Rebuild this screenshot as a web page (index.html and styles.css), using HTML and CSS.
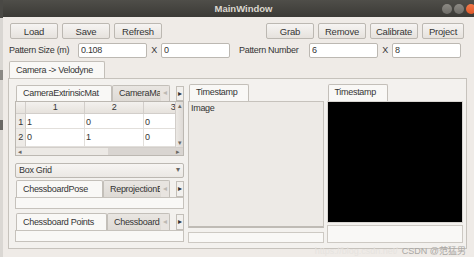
FILE: index.html
```
<!DOCTYPE html>
<html>
<head>
	<title>MainWindow</title>
	<link rel="stylesheet" href="styles.css">
</head>
<body>
	<div class="screen">
		<div class="edge"></div>
		<div class="window">
			<div class="titlebar">
				<span class="title">MainWindow</span>
				<div class="wbtns">
					<span class="wb"></span>
					<span class="wb"></span>
					<span class="wb close"></span>
				</div>
			</div>

			<div class="content">
				<div class="toolbar">
					<div class="group">
						<button class="btn">Load</button>
						<button class="btn">Save</button>
						<button class="btn">Refresh</button>
					</div>
					<div class="group">
						<button class="btn">Grab</button>
						<button class="btn">Remove</button>
						<button class="btn">Calibrate</button>
						<button class="btn narrow">Project</button>
					</div>
				</div>

				<div class="params">
					<span class="lbl">Pattern Size (m)</span>
					<input class="field" value="0.108">
					<span class="x">X</span>
					<input class="field" value="0">
					<span class="lbl gap">Pattern Number</span>
					<input class="field" value="6">
					<span class="x">X</span>
					<input class="field" value="8">
				</div>

				<div class="outer">
					<div class="tabbar">
						<div class="tab active big">Camera -&gt; Velodyne</div>
					</div>
					<div class="pane">
						<div class="col left">
							<div class="tabbar">
								<div class="tab active t1">CameraExtrinsicMat</div>
								<div class="tab t2"><span class="lab">CameraMat</span><span class="fade">◂</span></div>
								<div class="arrow">▸</div>
							</div>
							<div class="table">
								<div class="grid">
									<div class="hd corner"></div>
									<div class="hd">1</div>
									<div class="hd">2</div>
									<div class="hd cut">3</div>
									<div class="rn">1</div>
									<div class="cell">1</div>
									<div class="cell">0</div>
									<div class="cell">0</div>
									<div class="rn">2</div>
									<div class="cell">0</div>
									<div class="cell">1</div>
									<div class="cell">0</div>
								</div>
								<div class="vscroll"><span>▴</span><span>▾</span></div>
								<div class="hscroll"><span>◂</span><span>▸</span></div>
							</div>

							<div class="combo">Box Grid<span class="drop">▾</span></div>

							<div class="tabbar small">
								<div class="tab active t3">ChessboardPose</div>
								<div class="tab t4"><span class="lab">ReprojectionEr</span><span class="fade">◂</span></div>
								<div class="arrow">▸</div>
							</div>
							<div class="strip"></div>

							<div class="tabbar small gap">
								<div class="tab active t5">Chessboard Points</div>
								<div class="tab t6"><span class="lab">Chessboard N</span><span class="fade">◂</span></div>
								<div class="arrow">▸</div>
							</div>
							<div class="strip"></div>
						</div>

						<div class="col mid">
							<div class="tabbar">
								<div class="tab active ts">Timestamp</div>
							</div>
							<div class="imgpanel">Image</div>
							<div class="box"></div>
						</div>

						<div class="col right">
							<div class="tabbar">
								<div class="tab active ts">Timestamp</div>
							</div>
							<div class="black"></div>
							<div class="box tall"></div>
						</div>
					</div>
				</div>
				<div class="mark"><span class="url">https://blog.csdn.net/</span>CSDN @范猛男</div>
			</div>
		</div>
	</div>
</body>
</html>
```

FILE: styles.css
```
body {
	margin: 0;
	padding: 0;
	background-color: #efebe7;
	font-family: "Liberation Sans", Arial, sans-serif;
	font-size: 9px;
	letter-spacing: -0.3px;
	color: #353535;
}
.screen {
	display: flex;
	width: 474px;
	height: 257px;
	overflow: hidden;
}
.edge {
	width: 3px;
	flex: none;
	background: linear-gradient(#4a4945 0 18px, #d9d6d2 18px 70px, #8a8884 70px 80px, #d9d6d2 80px 120px, #6a6864 120px 130px, #dad7d3 130px);
}
.window {
	flex: 1;
	display: flex;
	flex-direction: column;
	background-color: #efebe7;
}
.titlebar {
	height: 17px;
	flex: none;
	display: flex;
	align-items: center;
	justify-content: center;
	position: relative;
	background: linear-gradient(#4f4e49, #3b3a36);
}
.title {
	font-weight: bold;
	font-size: 9.5px;
	letter-spacing: 0;
	color: #dcd8d0;
	margin-left: 10px;
}
.wbtns {
	position: absolute;
	right: -2px;
	top: 4px;
	display: flex;
	gap: 2px;
}
.wb {
	width: 10px;
	height: 10px;
	border-radius: 50%;
	background: linear-gradient(#8c8a84, #6e6c67);
}
.wb.close {
	background: linear-gradient(#f27a4a, #e0582a);
}
.content {
	flex: 1;
	padding: 6px 0 0 6px;
	position: relative;
}
.toolbar {
	display: flex;
	justify-content: space-between;
	width: 454px;
	padding-left: 1px;
}
.group {
	display: flex;
	gap: 4px;
}
.btn {
	width: 48px;
	height: 16px;
	padding: 0;
	font-family: inherit;
	font-size: 9.5px;
	letter-spacing: -0.2px;
	color: #353535;
	background: linear-gradient(#f6f4f2, #e6e2dd);
	border: 1px solid #bcb8b2;
	border-radius: 2px;
}
.btn.narrow {
	width: 42px;
}
.params {
	display: flex;
	align-items: center;
	margin-top: 3px;
	height: 16px;
}
.lbl {
	width: 69px;
	white-space: nowrap;
}
.lbl.gap {
	margin-left: 9px;
	width: 70px;
}
.field {
	width: 69px;
	height: 15px;
	box-sizing: border-box;
	padding: 0 2px;
	font-family: inherit;
	font-size: 9px;
	letter-spacing: -0.3px;
	color: #353535;
	background: #fff;
	border: 1px solid #bcb8b2;
	border-radius: 2px;
	outline: none;
}
.x {
	width: 14px;
	text-align: center;
}
.outer {
	margin-top: 4px;
	margin-left: -1px;
	width: 459px;
}
.tabbar {
	display: flex;
	height: 16px;
	align-items: flex-end;
	padding-left: 1px;
}
.tab {
	height: 16px;
	box-sizing: border-box;
	padding: 2px 0 0 6px;
	border: 1px solid #c3bfb9;
	border-bottom: none;
	border-radius: 2px 2px 0 0;
	background: linear-gradient(#e9e6e2, #dedad5);
	white-space: nowrap;
	overflow: hidden;
	position: relative;
}
.tab.active {
	background: #f9f8f6;
	padding-top: 2px;
}
.tab.big {
	width: 96px;
	height: 17px;
	padding-top: 3px;
}
.lab {
	display: block;
	overflow: hidden;
	margin-right: 9px;
}
.pane {
	height: 171px;
	box-sizing: border-box;
	border: 1px solid #c6c2bc;
	background: #f3f1ee;
	display: flex;
	padding: 6px 3px 0 6px;
	gap: 3px;
}
.col {
	display: flex;
	flex-direction: column;
}
.col.left {
	width: 169px;
	margin-right: 1px;
}
.col.mid {
	width: 136px;
}
.col.right {
	width: 137px;
}
.t1 { width: 96px; }
.t2 { width: 58px; }
.t3 { width: 87px; }
.t4 { width: 67px; }
.t5 { width: 91px; }
.t6 { width: 63px; }
.ts { width: 60px; height: 17px; padding-top: 3px; }
.fade {
	position: absolute;
	right: 0;
	top: 0;
	width: 8px;
	height: 15px;
	padding-top: 2px;
	text-align: center;
	font-size: 8px;
	color: #bdb9b3;
	background: #e8e4e0;
}
.arrow {
	margin-left: 6px;
	width: 8px;
	height: 15px;
	box-sizing: border-box;
	border: 1px solid #c3bfb9;
	background: #f2f0ed;
	font-size: 8px;
	text-align: center;
	line-height: 13px;
	color: #353535;
}
.table {
	height: 55px;
	box-sizing: border-box;
	border: 1px solid #bcb8b2;
	background: #fff;
	display: grid;
	grid-template-columns: 159px 8px;
	grid-template-rows: 45px 8px;
	overflow: hidden;
}
.grid {
	display: grid;
	grid-template-columns: 10px 59px 59px 59px;
	grid-template-rows: 12px 15px 18px;
	overflow: hidden;
}
.hd {
	background: linear-gradient(#f3f1ee, #e6e2dd);
	border-right: 1px solid #d2ceca;
	border-bottom: 1px solid #d2ceca;
	text-align: center;
	line-height: 11px;
}
.rn {
	background: #eeebe7;
	border-right: 1px solid #d2ceca;
	border-bottom: 1px solid #e2dfdb;
	padding-top: 3px;
	text-align: center;
}
.cell {
	padding: 3px 0 0 1px;
	border-right: 1px solid #e2dfdb;
	border-bottom: 1px solid #e2dfdb;
}
.vscroll, .hscroll {
	background: #e4e0dc;
	display: flex;
	justify-content: space-between;
	font-size: 7px;
	color: #6a6864;
}
.vscroll {
	flex-direction: column;
	align-items: center;
	background: linear-gradient(90deg, #ece9e5, #dedad6);
	border-left: 1px solid #d2ceca;
}
.hscroll {
	grid-column: 1 / 3;
	align-items: center;
	padding: 0 3px 0 2px;
	background: linear-gradient(90deg, #ece9e5 0 55%, #d9d5d1 55% 100%);
	border-top: 1px solid #d2ceca;
	line-height: 7px;
}
.combo {
	margin-top: 7px;
	height: 15px;
	box-sizing: border-box;
	border: 1px solid #bcb8b2;
	border-radius: 2px;
	background: linear-gradient(#f7f5f3, #ebe8e4);
	padding: 1px 3px;
	display: flex;
	justify-content: space-between;
}
.drop {
	font-size: 8px;
	color: #6a6864;
}
.tabbar.small {
	margin-top: 2px;
	height: 17px;
}
.tabbar.small .tab {
	height: 17px;
	padding-top: 3px;
}
.tabbar.small .arrow {
	height: 16px;
	line-height: 14px;
}
.tabbar.small .fade {
	height: 16px;
	padding-top: 3px;
}
.tabbar.gap {
	margin-top: 4px;
}
.strip {
	height: 12px;
	box-sizing: border-box;
	border: 1px solid #c6c2bc;
	background: #f9f8f6;
}
.imgpanel {
	height: 127px;
	box-sizing: border-box;
	border: 1px solid #c6c2bc;
	border-bottom: 2px solid #bfbbb5;
	background: #edeae6;
	padding: 1px 2px;
}
.box {
	margin-top: 4px;
	height: 11px;
	box-sizing: border-box;
	border: 1px solid #cdc9c3;
	background: #f9f8f6;
}
.black {
	height: 122px;
	box-sizing: border-box;
	border: 1px solid #d8d5d1;
	background: #000;
}
.box.tall {
	margin-top: 2px;
	height: 18px;
}
.mark {
	position: absolute;
	right: 8px;
	bottom: 0;
	font-family: "Liberation Sans", "Noto Sans CJK SC", sans-serif;
	font-size: 9px;
	letter-spacing: 0;
	color: #a9a7a4;
}
.url {
	color: #e6e3df;
	margin-right: 4px;
}
```
